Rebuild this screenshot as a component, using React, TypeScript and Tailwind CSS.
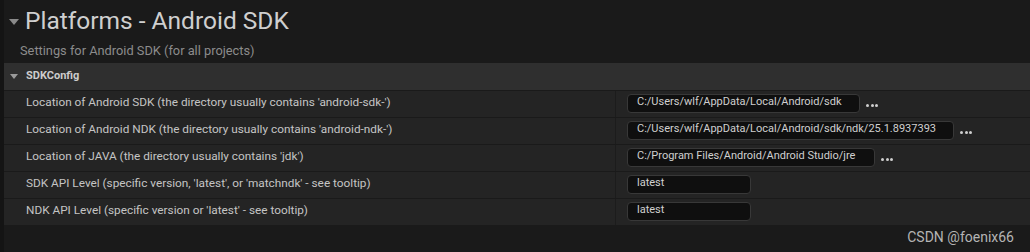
const font = { fontFamily: "Roboto, 'Liberation Sans', sans-serif" };

interface Row {
    label: string;
    value: string;
    inputWidth: string;
    browse?: boolean;
}

const rows: Row[] = [
    {
        label: "Location of Android SDK (the directory usually contains 'android-sdk-')",
        value: "C:/Users/wlf/AppData/Local/Android/sdk",
        inputWidth: "w-[233px]",
        browse: true,
    },
    {
        label: "Location of Android NDK (the directory usually contains 'android-ndk-')",
        value: "C:/Users/wlf/AppData/Local/Android/sdk/ndk/25.1.8937393",
        inputWidth: "w-[327px]",
        browse: true,
    },
    {
        label: "Location of JAVA (the directory usually contains 'jdk')",
        value: "C:/Program Files/Android/Android Studio/jre",
        inputWidth: "w-[248px]",
        browse: true,
    },
    {
        label: "SDK API Level (specific version, 'latest', or 'matchndk' - see tooltip)",
        value: "latest",
        inputWidth: "w-[124px]",
    },
    {
        label: "NDK API Level (specific version or 'latest' - see tooltip)",
        value: "latest",
        inputWidth: "w-[124px]",
    },
];

const Caret = ({ className }: { className: string }) => (
    <svg viewBox="0 0 10 6" className={className}>
        <path d="M0 0 L10 0 L5 6 Z" fill="currentColor" />
    </svg>
);

const BrowseDots = () => (
    <div className="flex items-center gap-[1.5px] ml-[6px] mt-[10px]">
        <span className="w-[3px] h-[3px] rounded-full bg-[#cfcfcf]" />
        <span className="w-[3px] h-[3px] rounded-full bg-[#cfcfcf]" />
        <span className="w-[3px] h-[3px] rounded-full bg-[#cfcfcf]" />
    </div>
);

const SettingRow = ({ row }: { row: Row }) => (
    <div className="flex h-[27px] bg-[#242424] border-b border-[#1a1a1a]">
        {/* Name column */}
        <div className="w-[612px] flex items-center pl-[22px] pb-[2px] text-[11.8px] text-[#c4c4c4] border-r border-[#1c1c1c]">
            {row.label}
        </div>

        {/* Value column */}
        <div className="flex-1 flex items-start pl-[11px] pt-[3px]">
            <div
                className={`${row.inputWidth} h-[19px] flex items-center pl-[9px] pb-[2px] rounded-[4px] bg-[#0f0f0f] border border-[#383838] text-[11px] text-[#d0d0d0]`}
            >
                {row.value}
            </div>
            {row.browse && <BrowseDots />}
        </div>
    </div>
);

export default function App() {
    return (
        <div className="w-[1030px] h-[252px] flex bg-[#1a1a1a] overflow-hidden" style={font}>
            <div className="w-[4px] bg-[#141414]" />

            <div className="flex-1 flex flex-col">
                {/* Title */}
                <div className="flex items-center pt-[7px] h-[35px]">
                    <Caret className="w-[10px] h-[6px] ml-[5px] mr-[6px] mt-[2px] text-[#8a8a8a]" />
                    <h1 className="text-[24.5px] leading-[28px] text-[#cfcfcf]">
                        Platforms - Android SDK
                    </h1>
                </div>
                <p className="mt-[8px] ml-[16px] text-[12.8px] leading-[16px] text-[#8c8c8c]">
                    Settings for Android SDK (for all projects)
                </p>

                {/* Category header */}
                <div className="mt-[4px] h-[28px] flex items-center bg-[#2f2f2f] border-b border-[#1a1a1a]">
                    <Caret className="w-[8px] h-[5px] ml-[6px] mr-[8px] text-[#9a9a9a]" />
                    <span className="text-[11px] font-bold text-[#cccccc]">SDKConfig</span>
                </div>

                {/* Rows */}
                <div className="flex flex-col">
                    {rows.map((row, i) => (
                        <SettingRow key={i} row={row} />
                    ))}
                </div>

                {/* Footer */}
                <div className="flex-1 flex justify-end items-start pt-[1px] pr-[16px]">
                    <span className="text-[14px] text-[#b4b4b4]">CSDN @foenix66</span>
                </div>
            </div>
        </div>
    );
}
